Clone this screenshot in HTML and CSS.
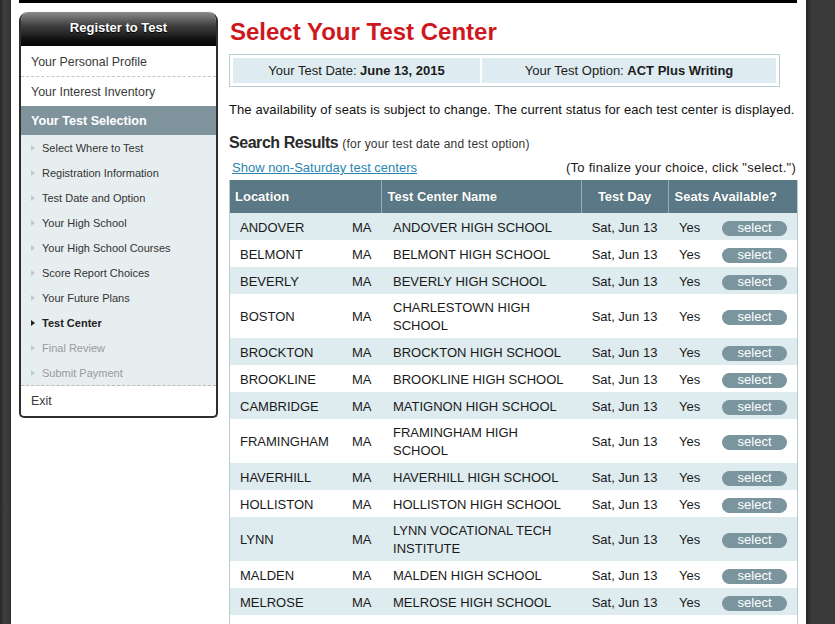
FILE: index.html
```html
<!DOCTYPE html>
<html>
<head>
<meta charset="utf-8">
<title>Select Your Test Center</title>
<link rel="stylesheet" href="styles.css">
</head>
<body>
<div class="frame">
  <div class="topbar"></div>
  <div class="layout">
    <nav class="sidebar">
      <div class="side-head">Register to Test</div>
      <div class="side-item dashed">Your Personal Profile</div>
      <div class="side-item">Your Interest Inventory</div>
      <div class="side-section">Your Test Selection</div>
      <ul class="sub-list">
        <li>Select Where to Test</li>
        <li>Registration Information</li>
        <li>Test Date and Option</li>
        <li>Your High School</li>
        <li>Your High School Courses</li>
        <li>Score Report Choices</li>
        <li>Your Future Plans</li>
        <li class="current">Test Center</li>
        <li class="disabled">Final Review</li>
        <li class="disabled">Submit Payment</li>
      </ul>
      <div class="side-item exit">Exit</div>
    </nav>
    <main class="content">
      <h1 class="title">Select Your Test Center</h1>
      <div class="info-box">
        <div class="info-cell one">Your Test Date: <b>June 13, 2015</b></div>
        <div class="info-cell two">Your Test Option: <b>ACT Plus Writing</b></div>
      </div>
      <p class="notice">The availability of seats is subject to change. The current status for each test center is displayed.</p>
      <h2 class="results">Search Results <span class="results-sub">(for your test date and test option)</span></h2>
      <div class="link-row">
        <a class="link" href="#">Show non-Saturday test centers</a>
        <span class="hint">(To finalize your choice, click "select.")</span>
      </div>
      <div class="table-wrap">
        <table class="centers">
          <colgroup>
            <col class="c-city"><col class="c-state"><col class="c-name"><col class="c-day"><col class="c-yes"><col class="c-sel">
          </colgroup>
          <thead>
            <tr>
              <th colspan="2" class="h-loc">Location</th>
              <th class="h-name">Test Center Name</th>
              <th class="h-day">Test Day</th>
              <th colspan="2" class="h-seats">Seats Available?</th>
            </tr>
          </thead>
          <tbody>
            <tr class="alt"><td class="city">ANDOVER</td><td class="state">MA</td><td class="name">ANDOVER HIGH SCHOOL</td><td class="day">Sat, Jun 13</td><td class="yes">Yes</td><td class="sel"><span class="btn">select</span></td></tr>
            <tr><td class="city">BELMONT</td><td class="state">MA</td><td class="name">BELMONT HIGH SCHOOL</td><td class="day">Sat, Jun 13</td><td class="yes">Yes</td><td class="sel"><span class="btn">select</span></td></tr>
            <tr class="alt"><td class="city">BEVERLY</td><td class="state">MA</td><td class="name">BEVERLY HIGH SCHOOL</td><td class="day">Sat, Jun 13</td><td class="yes">Yes</td><td class="sel"><span class="btn">select</span></td></tr>
            <tr><td class="city">BOSTON</td><td class="state">MA</td><td class="name">CHARLESTOWN HIGH SCHOOL</td><td class="day">Sat, Jun 13</td><td class="yes">Yes</td><td class="sel"><span class="btn">select</span></td></tr>
            <tr class="alt"><td class="city">BROCKTON</td><td class="state">MA</td><td class="name">BROCKTON HIGH SCHOOL</td><td class="day">Sat, Jun 13</td><td class="yes">Yes</td><td class="sel"><span class="btn">select</span></td></tr>
            <tr><td class="city">BROOKLINE</td><td class="state">MA</td><td class="name">BROOKLINE HIGH SCHOOL</td><td class="day">Sat, Jun 13</td><td class="yes">Yes</td><td class="sel"><span class="btn">select</span></td></tr>
            <tr class="alt"><td class="city">CAMBRIDGE</td><td class="state">MA</td><td class="name">MATIGNON HIGH SCHOOL</td><td class="day">Sat, Jun 13</td><td class="yes">Yes</td><td class="sel"><span class="btn">select</span></td></tr>
            <tr><td class="city">FRAMINGHAM</td><td class="state">MA</td><td class="name">FRAMINGHAM HIGH SCHOOL</td><td class="day">Sat, Jun 13</td><td class="yes">Yes</td><td class="sel"><span class="btn">select</span></td></tr>
            <tr class="alt"><td class="city">HAVERHILL</td><td class="state">MA</td><td class="name">HAVERHILL HIGH SCHOOL</td><td class="day">Sat, Jun 13</td><td class="yes">Yes</td><td class="sel"><span class="btn">select</span></td></tr>
            <tr><td class="city">HOLLISTON</td><td class="state">MA</td><td class="name">HOLLISTON HIGH SCHOOL</td><td class="day">Sat, Jun 13</td><td class="yes">Yes</td><td class="sel"><span class="btn">select</span></td></tr>
            <tr class="alt"><td class="city">LYNN</td><td class="state">MA</td><td class="name">LYNN VOCATIONAL TECH INSTITUTE</td><td class="day">Sat, Jun 13</td><td class="yes">Yes</td><td class="sel"><span class="btn">select</span></td></tr>
            <tr><td class="city">MALDEN</td><td class="state">MA</td><td class="name">MALDEN HIGH SCHOOL</td><td class="day">Sat, Jun 13</td><td class="yes">Yes</td><td class="sel"><span class="btn">select</span></td></tr>
            <tr class="alt"><td class="city">MELROSE</td><td class="state">MA</td><td class="name">MELROSE HIGH SCHOOL</td><td class="day">Sat, Jun 13</td><td class="yes">Yes</td><td class="sel"><span class="btn">select</span></td></tr>
          </tbody>
        </table>
      </div>
    </main>
  </div>
</div>
</body>
</html>
```

FILE: styles.css
```css
html, body {
  margin: 0;
  padding: 0;
  height: 624px;
  overflow: hidden;
}
body {
  background: linear-gradient(to right, #262626 0px, #3d3d3d 4px, #3a3a3a 9px, #2a2a2a 11px, #2a2a2a 806px, #262626 806px, #3a3a3a 812px, #3a3a3a 835px);
  font-family: Arial, "Liberation Sans", sans-serif;
  color: #1e1e1e;
}
.frame {
  margin-left: 11px;
  width: 795px;
  height: 624px;
  background: #fff;
  overflow: hidden;
}
.topbar {
  margin-left: 8px;
  width: 778px;
  height: 3px;
  background: #000;
}
.layout {
  display: flex;
  align-items: flex-start;
  padding-left: 8px;
  gap: 11px;
}

/* Sidebar */
.sidebar {
  margin-top: 9px;
  width: 195px;
  border: 2px solid #2e2e2e;
  border-top: none;
  border-radius: 9px 9px 5px 5px;
  background: #fff;
  overflow: hidden;
}
.side-head {
  margin: 0 -2px;
  height: 34px;
  line-height: 31px;
  text-align: center;
  color: #fff;
  font-weight: bold;
  font-size: 13px;
  border-radius: 9px 9px 0 0;
  background: linear-gradient(to bottom, #8d8d8d 0px, #6a6a6a 6px, #3e3e3e 14px, #262626 22px, #111 27px, #050505 34px);
  text-shadow: 0 1px 1px #000;
}
.side-item {
  font-size: 12.4px;
  color: #3a3a3a;
  padding-left: 10px;
  height: 29px;
  line-height: 30px;
}
.side-item.dashed {
  height: 30px;
  line-height: 32px;
  border-bottom: 1px dashed #c6c6c6;
}
.side-section {
  background: #7f939d;
  color: #fff;
  font-weight: bold;
  font-size: 12.6px;
  height: 29px;
  line-height: 30px;
  padding-left: 10px;
}
.sub-list {
  list-style: none;
  margin: 0;
  padding: 0;
  background: #e7eef0;
  border-bottom: 1px dashed #bcbcbc;
}
.sub-list li {
  height: 25px;
  line-height: 26px;
  font-size: 11px;
  color: #333;
  padding-left: 21px;
  position: relative;
}
.sub-list li::before {
  content: "";
  position: absolute;
  left: 10px;
  top: 10px;
  border-left: 4px solid #c4c9cb;
  border-top: 3px solid transparent;
  border-bottom: 3px solid transparent;
}
.sub-list li.current {
  font-weight: bold;
  color: #222;
}
.sub-list li.current::before {
  border-left-color: #222;
}
.sub-list li.disabled {
  color: #9a9a9a;
}
.side-item.exit {
  height: 30px;
  line-height: 30px;
}

/* Content */
.content {
  width: 569px;
}
.title {
  margin: 15px 0 0 1px;
  font-size: 24px;
  line-height: 28px;
  font-weight: bold;
  color: #cf1720;
}
.info-box {
  margin-top: 8px;
  width: 543px;
  border: 1px solid #b9cdd3;
  padding: 3px;
  display: flex;
  gap: 2px;
}
.info-cell {
  background: #deebf0;
  height: 25px;
  line-height: 25px;
  font-size: 13px;
  text-align: center;
  color: #1c1c1c;
}
.info-cell.one { width: 247px; }
.info-cell.two { flex: 1; }
.notice {
  margin: 15px 0 0 0;
  font-size: 13px;
  line-height: 16px;
  letter-spacing: 0.1px;
  color: #111;
}
.results {
  margin: 16px 0 0 0;
  font-size: 16px;
  line-height: 18px;
  letter-spacing: -0.45px;
  font-weight: bold;
  color: #2a2a2a;
}
.results-sub {
  font-size: 12px;
  letter-spacing: 0.2px;
  font-weight: normal;
  color: #333;
}
.link-row {
  margin-top: 7px;
  display: flex;
  justify-content: space-between;
  font-size: 13px;
  line-height: 16px;
  padding: 0 2px 0 3px;
}
.link {
  color: #2a86b0;
  text-decoration: underline;
}
.hint {
  color: #1c1c1c;
  letter-spacing: 0.25px;
}
.table-wrap {
  margin-top: 4px;
  width: 567px;
  border: 1px solid #b7cbd1;
  border-top: none;
  height: 460px;
}
.centers {
  width: 567px;
  border-collapse: collapse;
  table-layout: fixed;
  font-size: 13px;
}
.c-city { width: 115px; }
.c-state { width: 36px; }
.c-name { width: 200px; }
.c-day { width: 87px; }
.c-yes { width: 43px; }
.c-sel { width: 86px; }
.centers th {
  background: #5a7885;
  color: #fff;
  font-weight: bold;
  text-align: left;
  height: 33px;
  padding: 0 0 0 6px;
  border-left: 1px solid #93abb4;
  text-shadow: 0 0 1px #3c5660;
}
.centers th.h-loc { border-left: none; padding-left: 5px; }
.centers th.h-day { text-align: center; padding: 0; }
.centers tbody tr {
  height: 27px;
}
.centers td {
  padding: 5px 0 3px 0;
  line-height: 18px;
  vertical-align: middle;
  color: #1a1a1a;
}
.centers tr.alt td { background: #deebef; }
.centers td.city { padding-left: 10px; }
.centers td.state { padding-left: 7px; }
.centers td.name { padding-left: 12px; padding-right: 10px; }
.centers td.day { text-align: center; }
.centers td.yes { padding-left: 11px; }
.centers td.sel { padding-left: 11px; }
.btn {
  display: inline-block;
  width: 65px;
  height: 15px;
  line-height: 14px;
  border-radius: 8px;
  background: #7a959e;
  color: #fff;
  text-align: center;
  font-size: 13px;
  vertical-align: middle;
}
```
